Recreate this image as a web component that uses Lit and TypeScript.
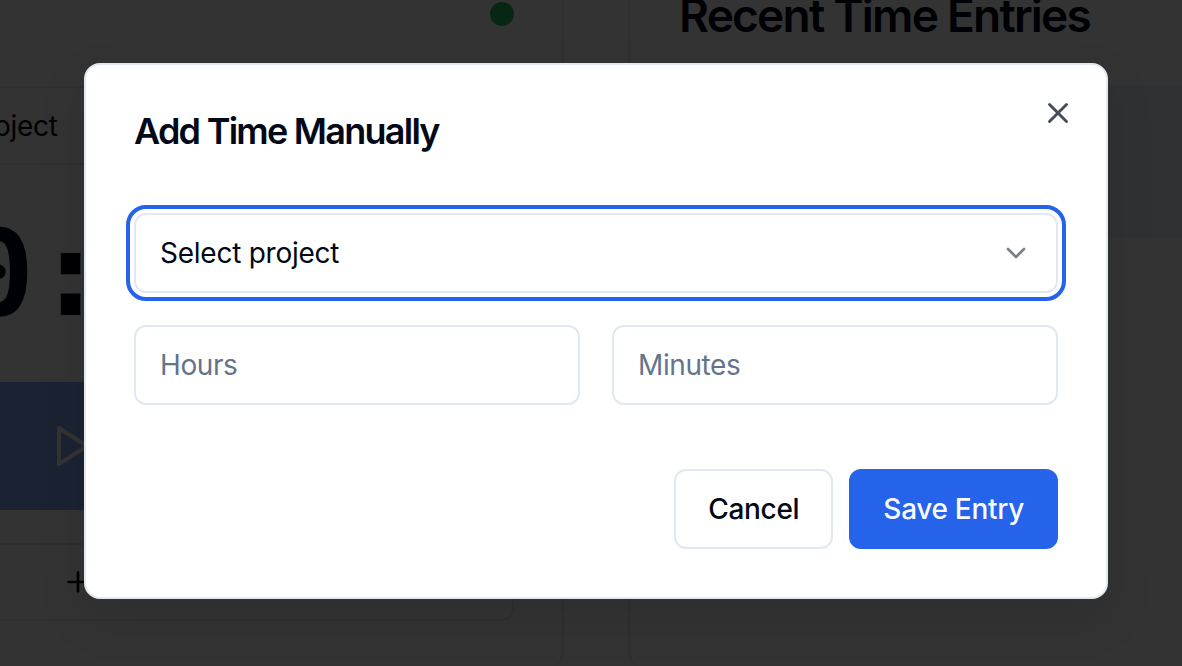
import { LitElement, html, css } from "lit";
import { customElement } from "lit/decorators.js";

@customElement("app-root")
export class AppRoot extends LitElement {
  static styles = css`
    :host { display: block; width: 1182px; height: 666px; overflow: hidden; position: relative; background: #fff; font-family: Inter, "Liberation Sans", sans-serif; color: #020817; }
    * { box-sizing: border-box; }
    .page { display: flex; gap: 64px; width: 1182px; height: 668px; }
    .left { width: 564px; height: 668px; flex: none; border-right: 2px solid #e2e8f0; border-bottom-right-radius: 16px; overflow: hidden; display: flex; flex-direction: column; align-items: flex-start; }
    .dot { flex: none; margin: 2px 0 0 490px; width: 24px; height: 24px; border-radius: 50%; background: #22c55e; }
    .select-row { flex: none; margin: 60px 0 0 -121px; width: 640px; height: 79px; border-top: 2px solid #e2e8f0; border-bottom: 2px solid #e2e8f0; font-size: 28px; letter-spacing: -0.3px; display: flex; align-items: center; }
    .timer { flex: none; margin: 39px 0 0 -110px; height: 140px; font-family: "DejaVu Sans Mono", monospace; font-weight: 700; font-size: 120px; line-height: 140px; white-space: nowrap; }
    .start { flex: none; margin-top: 38px; width: 500px; height: 128px; background: rgb(135, 175, 255); display: flex; padding: 40px 0 0 47px; }
    .add { flex: none; margin: 33px 0 0 -40px; width: 554px; height: 78px; border: 2px solid #e2e8f0; border-radius: 12px; padding: 21px 0 0 100px; }
    .right { flex: 1; min-width: 0; height: 668px; border-left: 2px solid #e2e8f0; border-bottom-left-radius: 16px; padding-left: 49px; overflow: hidden; display: flex; flex-direction: column; align-items: flex-start; }
    .right h2 { flex: none; margin: -13px 0 0; font-size: 46px; line-height: 56px; font-weight: 600; letter-spacing: -1.77px; white-space: nowrap; }
    .entry { flex: none; margin-top: 43px; width: 600px; height: 152px; background: #f1f5f9; }
    .overlay { position: absolute; inset: 0; background: rgba(0,0,0,.8); display: flex; align-items: flex-start; justify-content: flex-start; padding: 63px 0 0 84px; }
    .modal { width: 1024px; height: 536px; background: #fff; border: 2px solid #e2e8f0; border-radius: 16px; padding: 48px; position: relative; box-shadow: 0 20px 50px rgba(0,0,0,.1); display: flex; flex-direction: column; }
    .modal h3 { margin: 0; font-size: 36px; line-height: 36px; font-weight: 600; letter-spacing: -1.75px; color: #020817; }
    .close { position: absolute; right: 31px; top: 31px; width: 34px; height: 34px; padding: 0; border: 0; background: none; display: flex; color: #454c58; }
    .form { margin-top: 64px; display: flex; flex-direction: column; gap: 32px; }
    .select { height: 80px; border: 2px solid #e2e8f0; border-radius: 12px; display: flex; align-items: center; justify-content: space-between; padding: 0 24px; font-size: 28px; letter-spacing: -0.25px; outline: 4px solid #2563eb; outline-offset: 4px; background: #fff; }
    .select svg { color: #7b7f87; }
    .pair { display: grid; grid-template-columns: 1fr 1fr; gap: 32px; }
    .input { height: 80px; border: 2px solid #e2e8f0; border-radius: 12px; padding: 0 24px; font: inherit; font-size: 28px; letter-spacing: -0.4px; color: #64748b; display: flex; align-items: center; }
    .actions { display: flex; justify-content: flex-end; gap: 16px; margin-top: 64px; }
    .btn { height: 80px; border-radius: 12px; font: inherit; font-size: 28px; font-weight: 500; letter-spacing: -0.3px; padding: 0 32px; display: flex; align-items: center; border: 2px solid #e2e8f0; background: #fff; color: #020817; }
    .btn.primary { background: #2563eb; border-color: #2563eb; color: #f8fafc; }
  `;

  render() {
    return html`
      <div class="page">
        <div class="left">
          <div class="dot"></div>
          <div class="select-row"><span>Select project</span></div>
          <div class="timer">00:00:00</div>
          <div class="start">
            <svg width="48" height="48" viewBox="0 0 24 24" fill="none" stroke="#fff" stroke-width="2" stroke-linecap="round" stroke-linejoin="round"><polygon points="6 3 20 12 6 21 6 3"></polygon></svg>
          </div>
          <div class="add">
            <svg width="32" height="32" viewBox="0 0 24 24" fill="none" stroke="#020817" stroke-width="2" stroke-linecap="round"><path d="M5 12h14"></path><path d="M12 5v14"></path></svg>
          </div>
        </div>
        <div class="right">
          <h2>Recent Time Entries</h2>
          <div class="entry"></div>
        </div>
      </div>
      <div class="overlay">
        <div class="modal">
          <button class="close" aria-label="Close">
            <svg width="34" height="34" viewBox="0 0 24 24" fill="none" stroke="currentColor" stroke-width="2" stroke-linecap="round" stroke-linejoin="round"><path d="M18 6 6 18"></path><path d="m6 6 12 12"></path></svg>
          </button>
          <h3>Add Time Manually</h3>
          <div class="form">
            <div class="select">
              <span>Select project</span>
              <svg width="32" height="32" viewBox="0 0 24 24" fill="none" stroke="currentColor" stroke-width="2" stroke-linecap="round" stroke-linejoin="round"><path d="m6 9 6 6 6-6"></path></svg>
            </div>
            <div class="pair">
              <div class="input">Hours</div>
              <div class="input">Minutes</div>
            </div>
          </div>
          <div class="actions">
            <button class="btn">Cancel</button>
            <button class="btn primary">Save Entry</button>
          </div>
        </div>
      </div>
    `;
  }
}
